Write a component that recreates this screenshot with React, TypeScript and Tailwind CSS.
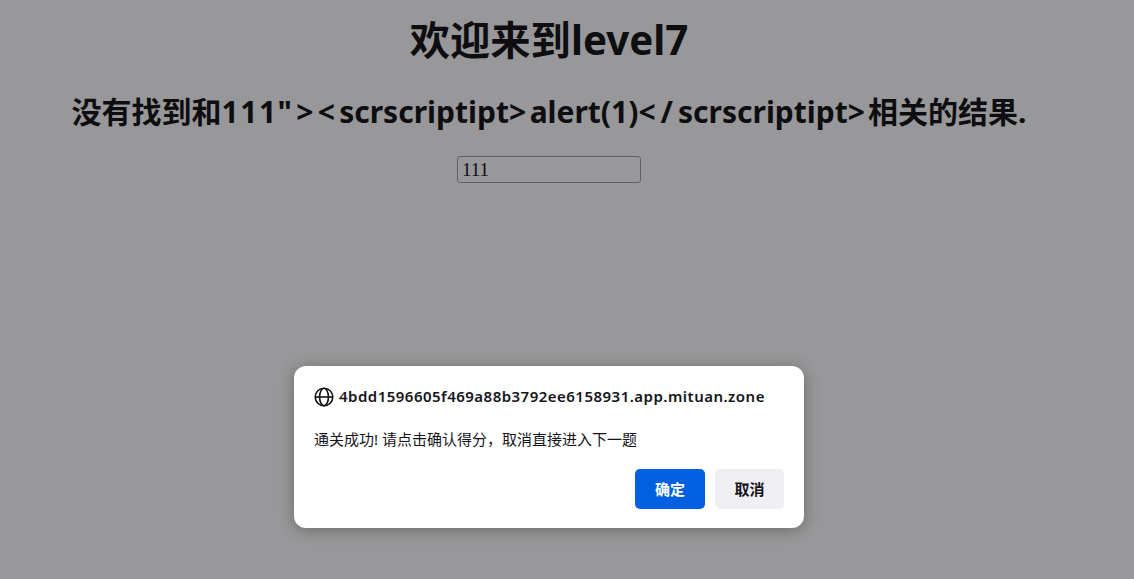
import React from 'react';

const sans = 'font-["Noto_Sans","Noto_Sans_CJK_SC",sans-serif]';

const GlobeIcon = () => (
  <svg width="20" height="20" viewBox="0 0 20 20" fill="none" stroke="#15141a" strokeWidth="1.6">
    <circle cx="10" cy="10" r="8.8" />
    <ellipse cx="10" cy="10" rx="4.4" ry="8.8" />
    <path d="M1.2 10h17.6" />
  </svg>
);

const App: React.FC = () => {
  return (
    <div className="relative h-[579px] w-[1134px] overflow-hidden bg-[#98989a]">
      <div className={`w-[1098px] text-center text-[#0e0e10] ${sans}`}>
        <h1 className="pt-[12px] text-[40.3px] leading-[56px] font-bold">欢迎来到level7</h1>
        <h2 className="mt-[22px] text-[30px] leading-[44px] font-bold whitespace-nowrap">
          没有找到和<span className="tracking-[1.5px]">111</span><span className="tracking-[4.3px]">"&gt;&lt;</span>scrscriptipt<span className="tracking-[3.5px]">&gt;</span>alert(1)<span className="tracking-[5px]">&lt;/</span>scrscriptipt<span className="tracking-[3px]">&gt;</span>相关的结果.
        </h2>
        <div className="mt-[22px] flex justify-center">
          <input
            readOnly
            value="111"
            className='h-[27px] w-[184px] rounded-[3px] border border-[#5f5f68] bg-transparent px-[4px] pt-[2px] font-["Liberation_Serif",serif] text-[19px] text-[#0e0e10] outline-none'
          />
        </div>
      </div>

      {/* alert dialog */}
      <div className="absolute inset-y-0 left-0 flex w-[1098px] items-start justify-center pt-[366px]">
        <div className={`h-[162px] w-[510px] rounded-[12px] bg-white px-[20px] pt-[20px] shadow-[0_2px_16px_rgba(0,0,0,0.3)] ${sans}`}>
          <div className="flex h-[21px] items-center gap-[5px]">
            <GlobeIcon />
            <span className="text-[15px] font-semibold tracking-[0.48px] whitespace-nowrap text-[#15141a]">4bdd1596605f469a88b3792ee6158931.app.mituan.zone</span>
          </div>
          <p className="mt-[22px] text-[15px] leading-[20px] text-[#15141a]">通关成功! 请点击确认得分，取消直接进入下一题</p>
          <div className="mt-[20px] flex justify-end gap-[10px]">
            <button className="h-[40px] w-[70px] rounded-[5px] bg-[#0060df] text-[15px] leading-[38px] font-bold text-white">确定</button>
            <button className="h-[40px] w-[69px] rounded-[5px] bg-[#f0f0f4] text-[15px] leading-[38px] font-bold text-[#15141a]">取消</button>
          </div>
        </div>
      </div>
    </div>
  );
};

export default App;
